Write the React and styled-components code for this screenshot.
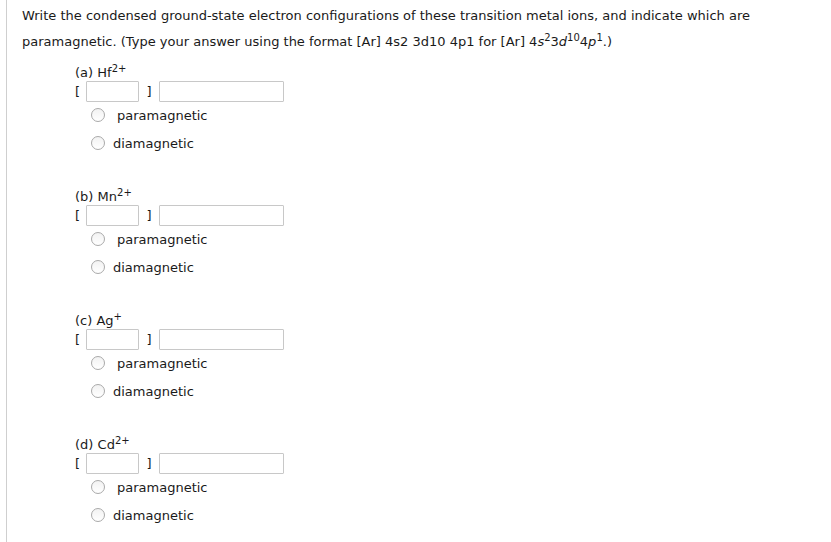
import React from "react";
import styled, { createGlobalStyle } from "styled-components";

const GlobalStyle = createGlobalStyle`
  html, body {
    margin: 0;
    padding: 0;
    background: #ffffff;
  }
  body {
    font-family: Verdana, "DejaVu Sans", sans-serif;
    font-size: 13px;
    color: #1a1a1a;
  }
`;

const Page = styled.div`
  margin-left: 6px;
  border-left: 1px solid #cfcfcf;
  min-height: 542px;
  box-sizing: border-box;
  padding: 3px 0 0 15px;
`;

const Intro = styled.p`
  margin: 0 0 8px;
  line-height: 26px;
`;

const Sup = styled.sup`
  font-size: 10px;
  line-height: 0;
  vertical-align: 5px;
`;

const Question = styled.div`
  margin-left: 53px;
  margin-bottom: 30px;
`;

const Label = styled.div`
  height: 20px;
  line-height: 20px;
`;

const AnswerRow = styled.div`
  display: flex;
  align-items: center;
  height: 22px;
  margin-top: -3px;
`;

const Bracket = styled.span`
  width: ${(p) => p.w}px;
  text-align: ${(p) => p.align || "left"};
`;

const Field = styled.input`
  box-sizing: border-box;
  width: ${(p) => p.w}px;
  height: 21px;
  border: 1px solid #c8c8c8;
  border-radius: 1px;
  margin: 0;
  padding: 0 4px;
  font: inherit;
  background: #fff;
`;

const Options = styled.div`
  margin-left: 16px;
  margin-top: -1px;
`;

const Option = styled.label`
  display: flex;
  align-items: center;
  height: 28px;
  cursor: pointer;
`;

const Radio = styled.span`
  box-sizing: border-box;
  width: 14px;
  height: 14px;
  border-radius: 50%;
  border: 1px solid #a9a9a9;
  background: linear-gradient(#f2f2f2, #ffffff);
  margin-right: ${(p) => p.gap}px;
  flex-shrink: 0;
`;

const questions = [
  { key: "a", base: "Hf", charge: "2+" },
  { key: "b", base: "Mn", charge: "2+" },
  { key: "c", base: "Ag", charge: "+" },
  { key: "d", base: "Cd", charge: "2+" }
];

function App() {
  return (
    <>
      <GlobalStyle />
      <Page>
        <Intro>
          Write the condensed ground-state electron configurations of these
          transition metal ions, and indicate which are
          <br />
          paramagnetic. (Type your answer using the format [Ar] 4s2 3d10 4p1
          for [Ar] 4<i>s</i>
          <Sup>2</Sup>3<i>d</i>
          <Sup>10</Sup>4<i>p</i>
          <Sup>1</Sup>.)
        </Intro>
        {questions.map((q) => (
          <Question key={q.key}>
            <Label>
              ({q.key}) {q.base}
              <Sup>{q.charge}</Sup>
            </Label>
            <AnswerRow>
              <Bracket w={11}>[</Bracket>
              <Field w={53} type="text" />
              <Bracket w={20} align="center">
                ]
              </Bracket>
              <Field w={125} type="text" />
            </AnswerRow>
            <Options>
              <Option>
                <Radio gap={12} />
                paramagnetic
              </Option>
              <Option>
                <Radio gap={8} />
                diamagnetic
              </Option>
            </Options>
          </Question>
        ))}
      </Page>
    </>
  );
}

export default App;
